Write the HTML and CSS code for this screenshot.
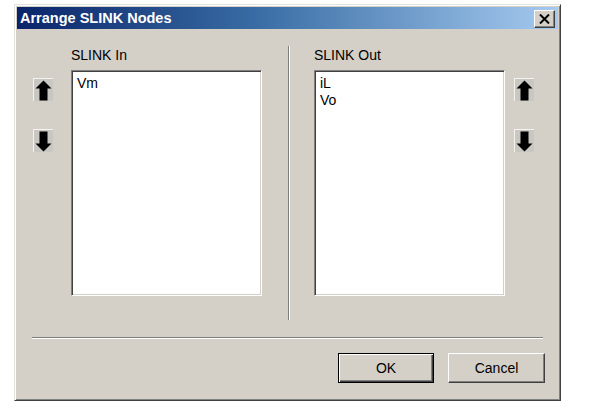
FILE: index.html
```html
<!DOCTYPE html>
<html>
<head>
<meta charset="utf-8">
<title>Arrange SLINK Nodes</title>
<link rel="stylesheet" href="styles.css">
</head>
<body>
<div class="window">
  <div class="titlebar">
    <span class="title">Arrange SLINK Nodes</span>
    <button class="close" aria-label="Close">
      <svg width="11" height="10" viewBox="0 0 11 10"><path d="M1 0.5 L10 9.5 M10 0.5 L1 9.5" stroke="#000" stroke-width="2" fill="none"/></svg>
    </button>
  </div>
  <div class="client">
    <div class="main">
      <div class="arrows">
        <button class="arrow" aria-label="Move up"><svg width="17" height="21" viewBox="0 0 17 21"><path d="M8.5 0.5 L16.5 8.5 L12.5 8.5 L12.5 20.5 L4.5 20.5 L4.5 8.5 L0.5 8.5 Z" fill="#000"/></svg></button>
        <button class="arrow" aria-label="Move down"><svg width="17" height="21" viewBox="0 0 17 21"><path d="M8.5 20.5 L16.5 12.5 L12.5 12.5 L12.5 0.5 L4.5 0.5 L4.5 12.5 L0.5 12.5 Z" fill="#000"/></svg></button>
      </div>
      <div class="panel panel-in">
        <div class="label">SLINK In</div>
        <div class="list">
          <div class="item">Vm</div>
        </div>
      </div>
      <div class="vsep"></div>
      <div class="panel panel-out">
        <div class="label">SLINK Out</div>
        <div class="list">
          <div class="item">iL</div>
          <div class="item">Vo</div>
        </div>
      </div>
      <div class="arrows arrows-right">
        <button class="arrow" aria-label="Move up"><svg width="17" height="21" viewBox="0 0 17 21"><path d="M8.5 0.5 L16.5 8.5 L12.5 8.5 L12.5 20.5 L4.5 20.5 L4.5 8.5 L0.5 8.5 Z" fill="#000"/></svg></button>
        <button class="arrow" aria-label="Move down"><svg width="17" height="21" viewBox="0 0 17 21"><path d="M8.5 20.5 L16.5 12.5 L12.5 12.5 L12.5 0.5 L4.5 0.5 L4.5 12.5 L0.5 12.5 Z" fill="#000"/></svg></button>
      </div>
    </div>
    <div class="hsep"></div>
    <div class="buttons">
      <button class="btn btn-default">OK</button>
      <button class="btn btn-cancel">Cancel</button>
    </div>
  </div>
</div>
</body>
</html>
```

FILE: styles.css
```css
html, body {
  margin: 0;
  padding: 0;
  background: #ffffff;
}

body {
  font-family: "Liberation Sans", Arial, sans-serif;
  font-size: 14px;
  color: #000;
}

.window {
  box-sizing: border-box;
  margin: 4px 0 0 14px;
  width: 547px;
  height: 397px;
  background: #d4d0c8;
  border: 1px solid;
  border-color: #e4e2dc #404040 #404040 #e4e2dc;
  box-shadow: inset 1px 1px 0 #ffffff, inset -1px -1px 0 #808080;
  padding: 2px;
  display: flex;
  flex-direction: column;
}

.titlebar {
  height: 22px;
  background: linear-gradient(to right, #0a246a 0%, #3a6ea5 45%, #a6caf0 100%);
  display: flex;
  align-items: flex-start;
}

.title {
  flex: 1;
  color: #ffffff;
  font-weight: bold;
  font-size: 14.5px;
  line-height: 21px;
  padding: 1px 0 0 3px;
  white-space: nowrap;
}

.close {
  box-sizing: border-box;
  width: 21px;
  height: 18px;
  margin: 3px 3px 0 0;
  padding: 0;
  background: #d4d0c8;
  border: 1px solid;
  border-color: #ffffff #404040 #404040 #ffffff;
  box-shadow: inset -1px -1px 0 #808080;
  display: flex;
  align-items: center;
  justify-content: center;
}

.close svg {
  display: block;
  margin: 0 1px 1px 0;
}

.client {
  flex: 1;
  display: flex;
  flex-direction: column;
}

.main {
  display: flex;
  margin: 17px 0 0 16px;
  height: 274px;
}

.arrows {
  width: 21px;
  padding-top: 32px;
  display: flex;
  flex-direction: column;
  gap: 28px;
}

.arrows-right {
  margin-left: 9px;
  width: 22px;
}

.arrow {
  box-sizing: border-box;
  width: 20px;
  height: 23px;
  padding: 0;
  background: #c9c7c2;
  border: 0;
  border-left: 1px solid #f4f3f0;
  border-top: 1px solid #f4f3f0;
  display: flex;
  align-items: center;
  justify-content: center;
}

.arrow svg {
  display: block;
}

.panel {
  width: 191px;
  display: flex;
  flex-direction: column;
}

.panel-in {
  margin-left: 17px;
}

.panel-out {
  margin-left: 24px;
}

.label {
  line-height: 16px;
  padding-top: 1px;
  white-space: nowrap;
}

.list {
  box-sizing: border-box;
  margin-top: 7px;
  height: 226px;
  background: #ffffff;
  border: 1px solid;
  border-color: #808080 #ffffff #ffffff #808080;
  box-shadow: inset 1px 1px 0 #404040, inset -1px -1px 0 #d4d0c8;
  padding: 4px 4px 0 5px;
}

.item {
  line-height: 17px;
  white-space: nowrap;
}

.vsep {
  margin-left: 26px;
  width: 0;
  border-left: 1px solid #808080;
  border-right: 1px solid #ffffff;
}

.hsep {
  margin: 17px 0 0 15px;
  width: 511px;
  height: 0;
  border-top: 1px solid #808080;
  border-bottom: 1px solid #ffffff;
}

.buttons {
  display: flex;
  margin: 14px 0 0 321px;
  gap: 14px;
}

.btn {
  box-sizing: border-box;
  height: 30px;
  padding: 0;
  font-family: "Liberation Sans", Arial, sans-serif;
  font-size: 14px;
  color: #000;
  background: #d4d0c8;
  border: 1px solid;
  border-color: #ffffff #404040 #404040 #ffffff;
  box-shadow: inset -1px -1px 0 #808080;
}

.btn-default {
  width: 96px;
  border: 1px solid #000000;
  box-shadow: inset 1px 1px 0 #ffffff, inset -1px -1px 0 #404040, inset -2px -2px 0 #808080;
}

.btn-cancel {
  width: 97px;
}
```
